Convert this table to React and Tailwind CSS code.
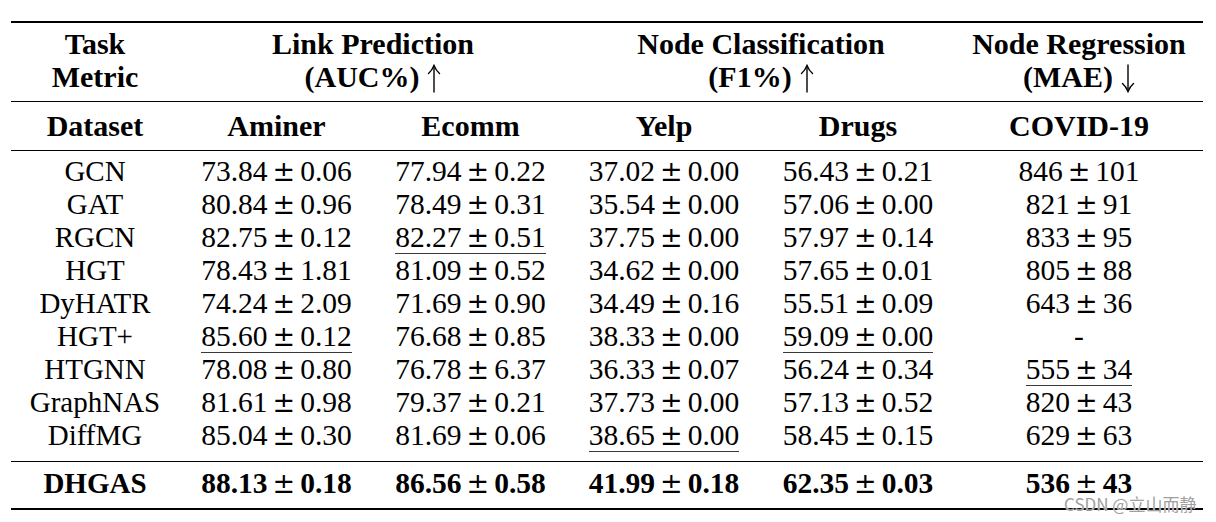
const rows = [
  ["GCN", "73.84 ± 0.06", "77.94 ± 0.22", "37.02 ± 0.00", "56.43 ± 0.21", "846 ± 101"],
  ["GAT", "80.84 ± 0.96", "78.49 ± 0.31", "35.54 ± 0.00", "57.06 ± 0.00", "821 ± 91"],
  ["RGCN", "82.75 ± 0.12", "_82.27 ± 0.51", "37.75 ± 0.00", "57.97 ± 0.14", "833 ± 95"],
  ["HGT", "78.43 ± 1.81", "81.09 ± 0.52", "34.62 ± 0.00", "57.65 ± 0.01", "805 ± 88"],
  ["DyHATR", "74.24 ± 2.09", "71.69 ± 0.90", "34.49 ± 0.16", "55.51 ± 0.09", "643 ± 36"],
  ["HGT+", "_85.60 ± 0.12", "76.68 ± 0.85", "38.33 ± 0.00", "_59.09 ± 0.00", "-"],
  ["HTGNN", "78.08 ± 0.80", "76.78 ± 6.37", "36.33 ± 0.07", "56.24 ± 0.34", "_555 ± 34"],
  ["GraphNAS", "81.61 ± 0.98", "79.37 ± 0.21", "37.73 ± 0.00", "57.13 ± 0.52", "820 ± 43"],
  ["DiffMG", "85.04 ± 0.30", "81.69 ± 0.06", "_38.65 ± 0.00", "58.45 ± 0.15", "629 ± 63"],
];

const best = ["DHGAS", "88.13 ± 0.18", "86.56 ± 0.58", "41.99 ± 0.18", "62.35 ± 0.03", "536 ± 43"];

const cols = "grid grid-cols-[168px_195px_193px_194px_194px_248px]";

// mean ± std, with the wider math-style plus-minus of the paper
const Val = ({ v, bold }) => {
  const parts = v.split(" ± ");
  if (parts.length < 2) return <span>{v}</span>;
  return (
    <>
      <span className={bold ? "font-bold" : ""}>{parts[0]}</span>
      <span
        className="text-[27px] leading-[20px] mx-[5px] font-normal"
        style={{ fontFamily: '"DejaVu Serif", serif' }}
      >
        ±
      </span>
      <span className={bold ? "font-bold" : ""}>{parts[1]}</span>
    </>
  );
};

const Cell = ({ v }) => {
  if (v.startsWith("_")) {
    return (
      <span className="inline-block leading-[32px] border-b border-[#3a3a3a]">
        <Val v={v.slice(1)} />
      </span>
    );
  }
  return <Val v={v} />;
};

// thin math arrow (\uparrow / \downarrow)
const Arrow = ({ down }) => (
  <svg
    width="14"
    height="29"
    viewBox="0 0 14 29"
    className="inline-block ml-[8px] align-[-6px]"
    aria-label={down ? "↓" : "↑"}
  >
    <g
      fill="none"
      stroke="#000"
      strokeWidth="1.4"
      strokeLinecap="round"
      transform={down ? "rotate(180 7 14.5)" : undefined}
    >
      <path d="M7 2 V28" />
      <path d="M1.5 9.5 Q5 6.5 7 1.5 Q9 6.5 12.5 9.5" />
    </g>
  </svg>
);

export default function App() {
  return (
    <div
      className="relative w-[1216px] h-[522px] bg-white text-black"
      style={{ fontFamily: '"Liberation Serif", "Times New Roman", serif' }}
    >
      <div className="ml-[11px] w-[1192px] pt-[21px]">
        <div className="h-[2px] bg-black" />

        {/* task / metric header */}
        <div className={`${cols} pt-[4px] pb-[8px] text-[30px] leading-[33px] font-bold text-center`}>
          <div>
            <div>Task</div>
            <div>Metric</div>
          </div>
          <div className="col-span-2">
            <div>Link Prediction</div>
            <div>
              (AUC%)<Arrow />
            </div>
          </div>
          <div className="col-span-2">
            <div>Node Classification</div>
            <div>
              (F1%)<Arrow />
            </div>
          </div>
          <div>
            <div>Node Regression</div>
            <div>
              (MAE)<Arrow down />
            </div>
          </div>
        </div>

        <div className="h-px bg-black" />

        <div className={`${cols} pt-[7px] pb-[8px] text-[30px] leading-[33px] font-bold text-center`}>
          <div>Dataset</div>
          <div>Aminer</div>
          <div>Ecomm</div>
          <div>Yelp</div>
          <div>Drugs</div>
          <div>COVID-19</div>
        </div>

        <div className="h-px bg-black" />

        <div className="pt-[4px] pb-[9px] text-[29.5px] leading-[33px]">
          {rows.map((r) => (
            <div key={r[0]} className={`${cols} text-center`}>
              <div className="text-[29px]">{r[0]}</div>
              {r.slice(1).map((v, i) => (
                <div key={i}>
                  <Cell v={v} />
                </div>
              ))}
            </div>
          ))}
        </div>

        <div className="h-px bg-black" />

        <div className={`${cols} pt-[5px] pb-[8px] text-[29.5px] leading-[33px] text-center`}>
          <div className="font-bold text-[29px]">{best[0]}</div>
          {best.slice(1).map((v, i) => (
            <div key={i}>
              <Val v={v} bold />
            </div>
          ))}
        </div>

        <div className="h-[2px] bg-black" />
      </div>

      <div
        className="absolute left-[1064px] top-[494px] text-[17px] leading-[20px] text-[#a0a0a0] whitespace-nowrap"
        style={{ fontFamily: '"Noto Sans CJK SC", sans-serif', textShadow: "0 0 1px #fff" }}
      >
        CSDN @立山而静
      </div>
    </div>
  );
}
